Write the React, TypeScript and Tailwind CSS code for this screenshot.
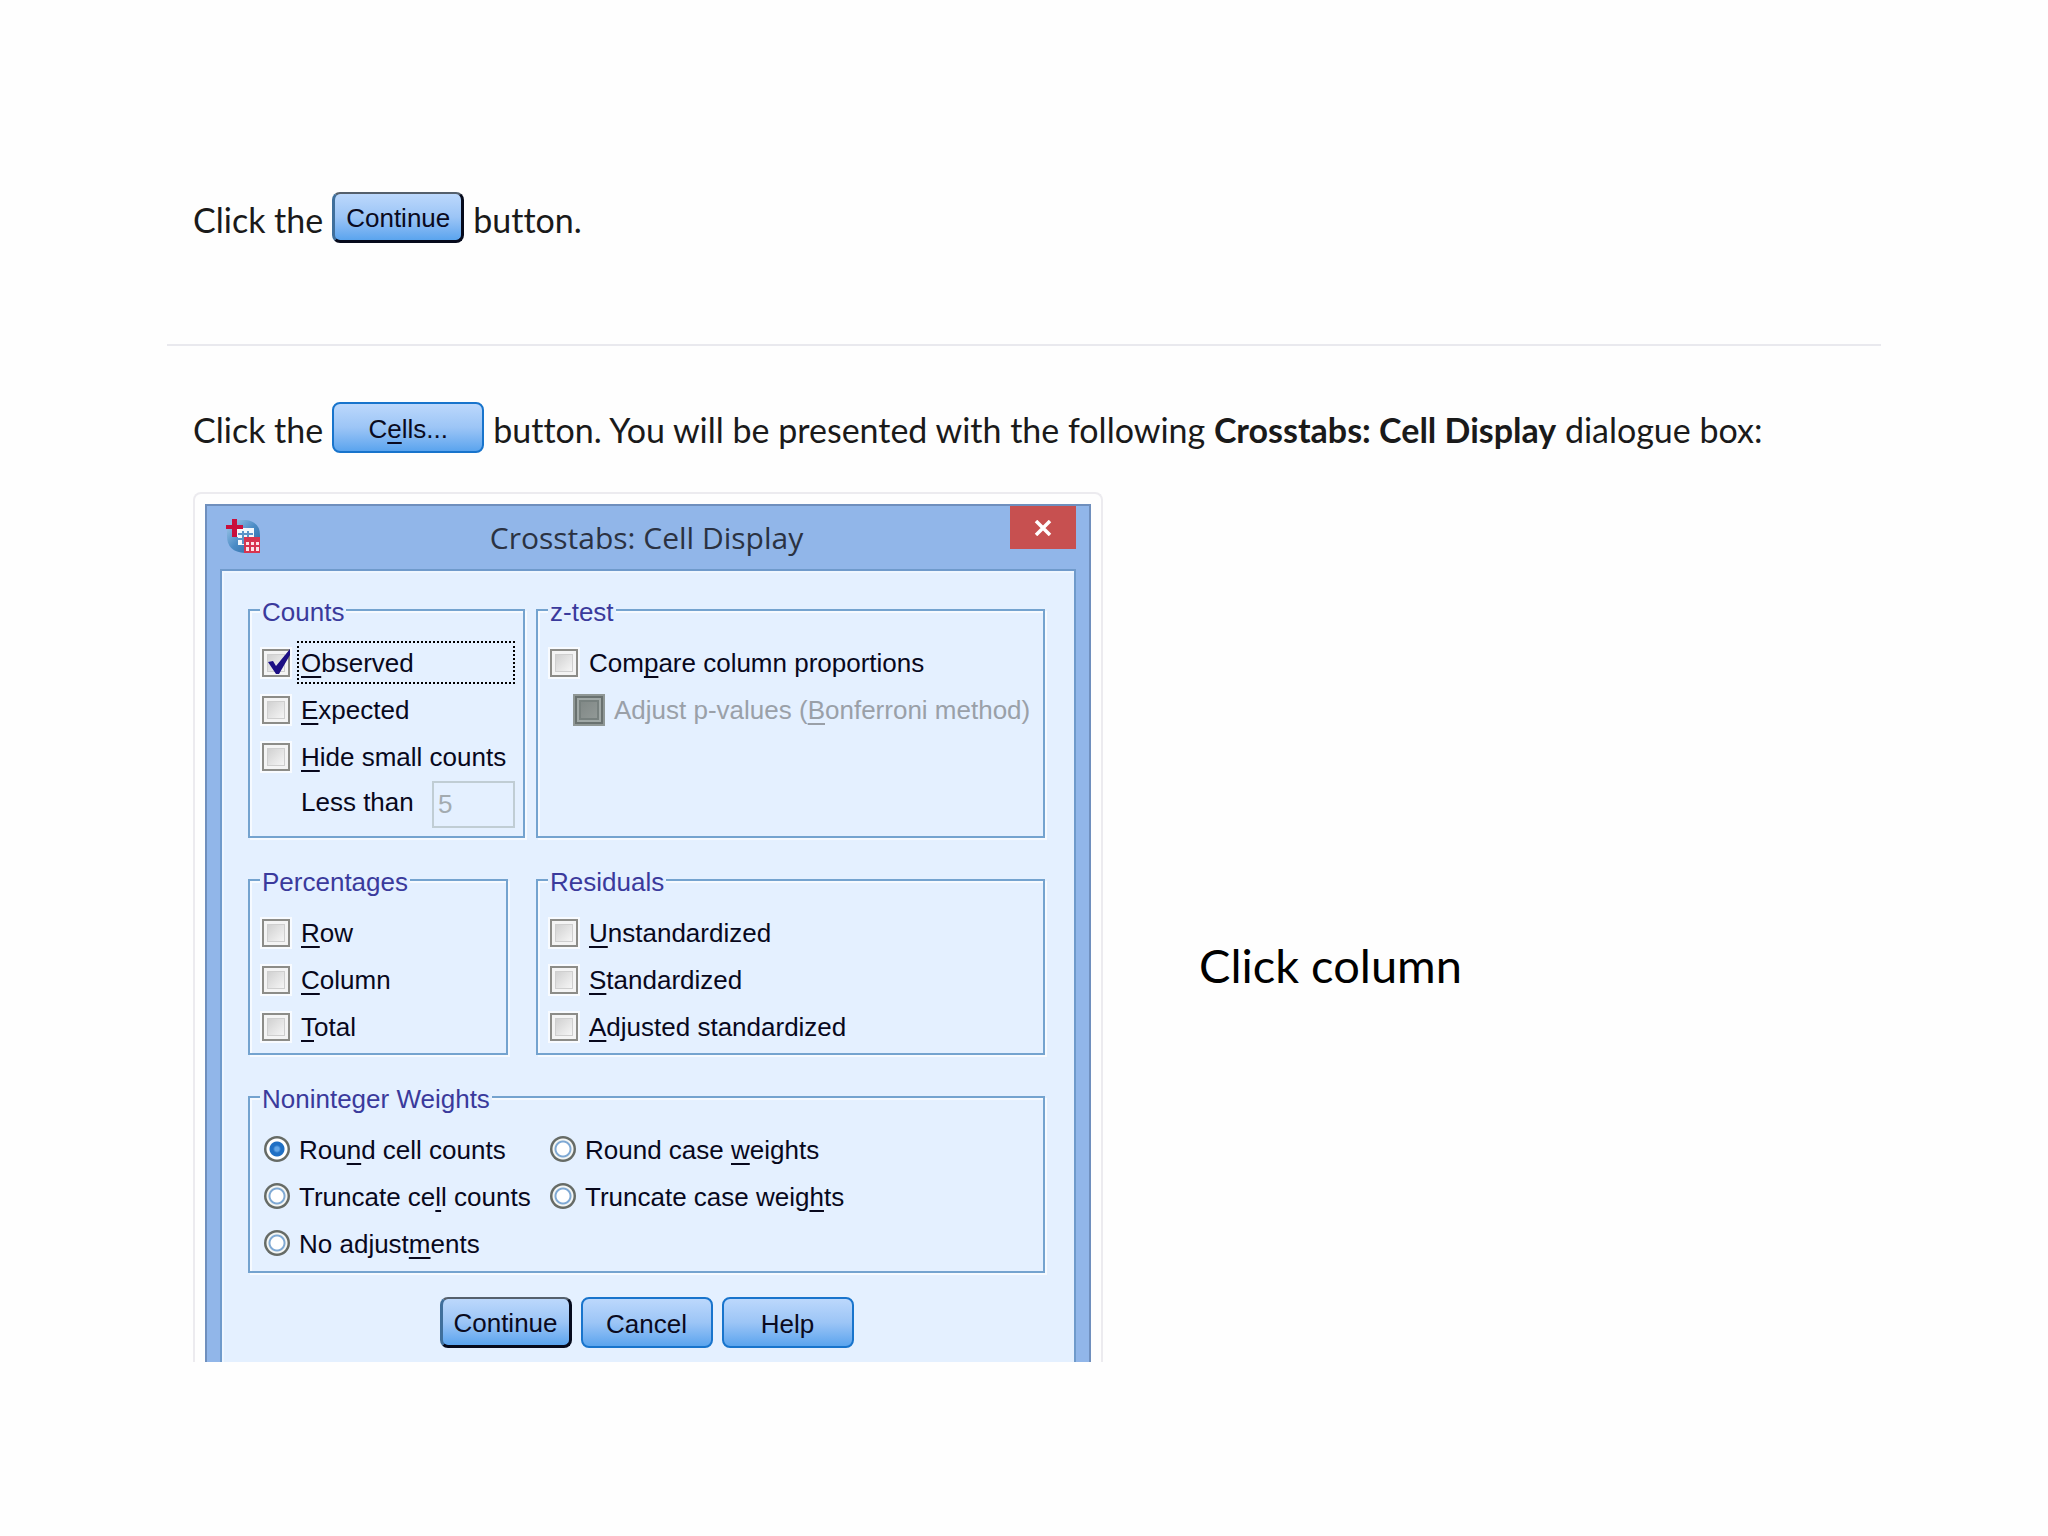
import type { ReactNode } from "react";

const K = ({ children }: { children: ReactNode }) => (
  <span className="underline decoration-2 underline-offset-4 [text-decoration-skip-ink:none]">{children}</span>
);

function Group({ title, children, className = "" }: { title: string; children: ReactNode; className?: string }) {
  return (
    <fieldset
      className={`min-w-0 border-2 border-[#74a3cf] pl-3 pr-2 shadow-[inset_2px_2px_0_#f6faff,2px_2px_0_#f6faff] ${className}`}
    >
      <legend className="-ml-[2px] bg-[#e4f0ff] px-[2px] pt-1 text-[26px] leading-[28px] text-[#3a3a9c]">{title}</legend>
      {children}
    </fieldset>
  );
}

function Check({
  id,
  children,
  checked = false,
  disabled = false,
}: {
  id: string;
  children: ReactNode;
  checked?: boolean;
  disabled?: boolean;
}) {
  return (
    <div className={`flex h-[47px] items-center ${disabled ? "pl-[25px] text-[#9aa0a8]" : ""}`}>
      <span className="relative flex size-[28px] shrink-0">
        <input
          id={id}
          type="checkbox"
          defaultChecked={checked}
          disabled={disabled}
          className={`size-[28px] appearance-none border-2 ${
            disabled
              ? "border-[#69716f] bg-linear-to-br from-[#7d8583] to-[#959c9a] shadow-[0_0_0_2px_#8f9795,inset_0_0_0_2px_#a0a8a6,inset_0_0_0_4px_#77807e]"
              : "border-[#8c8c88] bg-linear-to-br from-[#c8c8c8] to-white shadow-[0_0_0_2px_#f8fbff,inset_0_0_0_3px_#f4f4f4,inset_0_0_0_4px_#cfcfcf]"
          }`}
        />
        {checked && (
          <svg viewBox="0 0 28 28" className="pointer-events-none absolute inset-0 size-[28px]" aria-hidden="true">
            <path d="M6 13 L11 12 L14 17 L28 0 V6 L17 25 H14 Z" fill="#1c0f84" />
          </svg>
        )}
      </span>
      <label
        htmlFor={id}
        className={`ml-[7px] flex h-[43px] items-center whitespace-nowrap border-2 px-[2px] ${
          checked ? "flex-1 border-dotted border-black" : "border-transparent"
        }`}
      >
        <span>{children}</span>
      </label>
    </div>
  );
}

function Radio({ id, children, checked = false }: { id: string; children: ReactNode; checked?: boolean }) {
  return (
    <div className="flex h-[47px] items-center">
      <input
        id={id}
        type="radio"
        name="weights"
        defaultChecked={checked}
        className="ml-[2px] size-[26px] shrink-0 appearance-none rounded-full bg-[radial-gradient(circle,#fff_0_6px,#7fa9d4_7px_8px,#f4f6f4_9px_10px,#666b66_11px_13px)] checked:bg-[radial-gradient(circle,#63a6e8_0_2px,#1f6fc4_4px_7px,#fff_8px_10px,#666b66_11px_13px)]"
      />
      <label htmlFor={id} className="ml-[9px] whitespace-nowrap pt-[2px]">
        <span>{children}</span>
      </label>
    </div>
  );
}

function Btn({ children, primary = false, className = "w-[132px]" }: { children: ReactNode; primary?: boolean; className?: string }) {
  return (
    <button
      type="button"
      className={`h-[51px] rounded-[8px] border-2 bg-linear-to-b from-[#bcd8fc] via-[#9cc5f6] to-[#5aa4ee] pt-[2px] font-['Liberation_Sans',sans-serif] text-[26px] leading-[30px] text-[#0a0a20] ${
        primary
          ? "border-t-[#55606c] border-r-[3px] border-b-[3px] border-l-[3px] border-r-[#060a1c] border-b-[#060a1c] border-l-[#3f6f9c]"
          : "border-[#1874cc]"
      } ${className}`}
    >
      {children}
    </button>
  );
}

function AppIcon() {
  return (
    <svg viewBox="0 0 35 35" className="size-[35px]" aria-hidden="true">
      <defs>
        <linearGradient id="globe" x1="0" y1="0" x2="1" y2="1">
          <stop offset="0" stopColor="#a9cdec" />
          <stop offset="0.5" stopColor="#4b8cc6" />
          <stop offset="1" stopColor="#2b669f" />
        </linearGradient>
      </defs>
      <path d="M8 1 H20 Q34 3 34 16 V34 H19 Q1 33 1 17 V8 Z" fill="url(#globe)" />
      <path d="M8 9 H28 V19 H18 V26 H12 V18 H6 V14 H8 Z" fill="#f4f8fc" />
      <path d="M12 15 H27 M12 20 H19 M17 12 V25 M22 12 V18" stroke="#5c93c8" strokeWidth="2" />
      <path d="M6 0 H11 V6 H17 V10 H11 V18 H6 V10 H0 V6 H6 Z" fill="#c90f3c" />
      <path d="M18 18 H34 V34 H18 Z" fill="#d8344f" />
      <path d="M20 23 H23 V26 H20 Z M25 23 H28 V26 H25 Z M30 23 H33 V26 H30 Z M20 28 H23 V32 H20 Z M25 28 H28 V32 H25 Z M30 28 H33 V32 H30 Z" fill="#fbe4e8" />
    </svg>
  );
}

export default function App() {
  return (
    <main className="min-h-screen bg-[#fefefe] px-[167px] pt-[190px] text-black">
      <p className="flex items-center pl-[26px] font-[Lato,sans-serif] text-[34px] leading-[51px] text-[#1a1a1a] [font-variant-ligatures:none]">
        <span className="pt-1">Click the</span>
        <span className="mx-[9px] flex">
          <Btn primary>Continue</Btn>
        </span>
        <span className="pt-1">button.</span>
      </p>
      <hr className="mt-[99px] border-t-2 border-[#e9e9ee]" />
      <p className="mt-[54px] flex items-center whitespace-nowrap pl-[26px] font-[Lato,sans-serif] text-[34px] leading-[51px] text-[#1a1a1a] [font-variant-ligatures:none]">
        <span className="pt-1">Click the</span>
        <span className="mx-[9px] flex">
          <Btn className="w-[152px]">
            C<K>e</K>lls...
          </Btn>
        </span>
        <span className="pt-1">
          button. You will be presented with the following <strong>Crosstabs: Cell Display</strong> dialogue box:
        </span>
      </p>

      <div className="mt-[37px] flex pl-[26px]">
        <div className="w-[910px] shrink-0 rounded-t-[8px] border-2 border-b-0 border-[#ecebef] px-[10px] pt-[10px]">
          <section className="border-2 border-b-0 border-[#6f8fbd] bg-[#91b6e9] px-[13px] font-['Liberation_Sans',sans-serif]">
            <header className="flex h-[63px] items-start">
              <div className="pt-[13px] pl-[6px]">
                <AppIcon />
              </div>
              <h1 className="flex-1 pt-3 pl-[22px] text-center font-['Open_Sans',sans-serif] text-[30px] leading-[40px] text-[#2b3242]">
                Crosstabs: Cell Display
              </h1>
              <button type="button" aria-label="Close" className="flex h-[43px] w-[66px] items-center justify-center bg-[#c75050]">
                <svg viewBox="0 0 18 16" className="h-[16px] w-[18px]" aria-hidden="true">
                  <path d="M2 1 L16 15 M16 1 L2 15" stroke="#fff" strokeWidth="3.5" />
                </svg>
              </button>
            </header>
            <div className="border-2 border-b-0 border-[#6f9acb] bg-[#e4f0ff] pt-[23px] pr-[29px] pb-[14px] pl-[26px] text-[26px] leading-[30px] text-[#08081c] shadow-[inset_2px_2px_0_#eef6ff]">
              <div className="flex gap-[11px]">
                <Group title="Counts" className="w-[277px] pb-2">
                  <div className="pt-[13px]">
                    <Check id="observed" checked>
                      <K>O</K>bserved
                    </Check>
                    <Check id="expected">
                      <K>E</K>xpected
                    </Check>
                    <Check id="hide">
                      <K>H</K>ide small counts
                    </Check>
                    <div className="flex h-[48px] items-center pl-[39px]">
                      <label htmlFor="less" className="pb-1">
                        Less than
                      </label>
                      <input
                        id="less"
                        type="text"
                        defaultValue="5"
                        disabled
                        className="ml-auto h-[47px] w-[83px] border-2 border-[#c0cdd4] bg-transparent px-[4px] text-[#a3abb0]"
                      />
                    </div>
                  </div>
                </Group>
                <Group title="z-test" className="flex-1">
                  <div className="pt-[13px]">
                    <Check id="compare">
                      Com<K>p</K>are column proportions
                    </Check>
                    <Check id="adjust" disabled>
                      Adjust p-values (<K>B</K>onferroni method)
                    </Check>
                  </div>
                </Group>
              </div>
              <div className="mt-[26px] flex gap-[28px]">
                <Group title="Percentages" className="w-[260px] pb-[3px]">
                  <div className="pt-[13px]">
                    <Check id="row">
                      <K>R</K>ow
                    </Check>
                    <Check id="column">
                      <K>C</K>olumn
                    </Check>
                    <Check id="total">
                      <K>T</K>otal
                    </Check>
                  </div>
                </Group>
                <Group title="Residuals" className="flex-1 pb-[3px]">
                  <div className="pt-[13px]">
                    <Check id="unstandardized">
                      <K>U</K>nstandardized
                    </Check>
                    <Check id="standardized">
                      <K>S</K>tandardized
                    </Check>
                    <Check id="adjusted">
                      <K>A</K>djusted standardized
                    </Check>
                  </div>
                </Group>
              </div>
              <Group title="Noninteger Weights" className="mt-[26px] pb-[5px]">
                <div className="grid grid-cols-[286px_1fr] pt-3">
                  <Radio id="round-cell" checked>
                    Rou<K>n</K>d cell counts
                  </Radio>
                  <Radio id="round-case">
                    Round case <K>w</K>eights
                  </Radio>
                  <Radio id="truncate-cell">
                    Truncate ce<K>l</K>l counts
                  </Radio>
                  <Radio id="truncate-case">
                    Truncate case weig<K>h</K>ts
                  </Radio>
                  <Radio id="none">
                    No adjust<K>m</K>ents
                  </Radio>
                </div>
              </Group>
              <div className="mt-[24px] flex justify-center gap-[9px]">
                <Btn primary>Continue</Btn>
                <Btn>Cancel</Btn>
                <Btn>Help</Btn>
              </div>
            </div>
          </section>
        </div>
        <p className="self-center pt-[76px] pl-[96px] font-[Lato,sans-serif] text-[47px] leading-[56px] whitespace-nowrap">Click column</p>
      </div>
    </main>
  );
}
